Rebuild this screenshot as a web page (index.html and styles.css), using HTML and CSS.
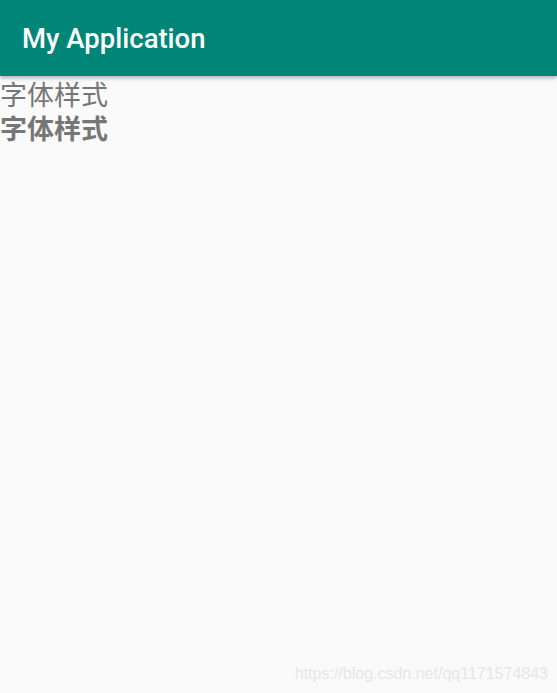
FILE: index.html
```html
<!DOCTYPE html>
<html>
<head>
<meta charset="utf-8">
<link rel="stylesheet" href="styles.css">
</head>
<body>
<header class="appbar"><span class="title">My Application</span></header>
<main class="content">
  <div class="line">字体样式</div>
  <div class="line bold">字体样式</div>
</main>
<div class="watermark">https://blog.csdn.net/qq1171574843</div>
</body>
</html>
```
FILE: styles.css
```css
html, body {
  margin: 0;
  padding: 0;
  height: 100%;
}
body {
  background: #fafafa;
  font-family: Roboto, "Noto Sans CJK SC", sans-serif;
  display: flex;
  flex-direction: column;
  overflow: hidden;
}
.appbar {
  height: 76px;
  background: #008577;
  box-shadow: 0 2px 4px rgba(0,0,0,0.3);
  display: flex;
  align-items: center;
  padding-left: 22px;
  flex-shrink: 0;
  position: relative;
  z-index: 1;
}
.title {
  color: #ffffff;
  font-family: Roboto, sans-serif;
  font-weight: 500;
  font-size: 27.5px;
  margin-top: 0;
}
.content {
  flex: 1;
  padding-top: 1px;
}
.line {
  font-family: "Noto Sans CJK SC", sans-serif;
  font-size: 27px;
  line-height: 34px;
  color: #767676;
}
.bold {
  font-weight: 700;
}
.watermark {
  text-align: right;
  padding-right: 9px;
  padding-bottom: 10px;
  font-family: "Liberation Sans", Arial, sans-serif;
  font-size: 16px;
  color: #e6e6e6;
  line-height: 18px;
}
```
